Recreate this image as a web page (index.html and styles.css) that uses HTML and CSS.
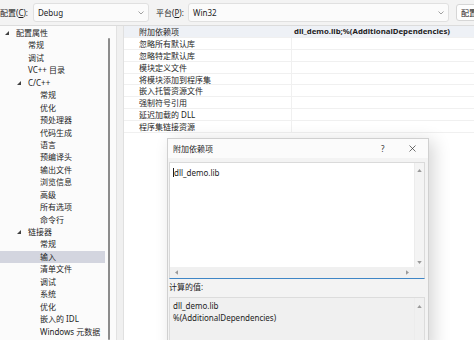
FILE: index.html
```html
<!DOCTYPE html>
<html lang="zh-CN">
<head>
<meta charset="utf-8">
<title>属性页</title>
<link rel="stylesheet" href="styles.css">
</head>
<body>
<div class="app">
  <div class="topbar">
    <span class="lbl lbl-cfg">配置(<u>C</u>):</span>
    <div class="combo combo-cfg"><span>Debug</span><svg class="chev" viewBox="0 0 6 4"><polyline points="0.5,0.5 3,3 5.5,0.5"/></svg></div>
    <span class="lbl lbl-plat">平台(<u>P</u>):</span>
    <div class="combo combo-plat"><span>Win32</span><svg class="chev" viewBox="0 0 6 4"><polyline points="0.5,0.5 3,3 5.5,0.5"/></svg></div>
    <div class="btn">配置管理器(<u>O</u>)...</div>
  </div>
  <div class="main">
    <div class="tree">
      <ul class="tree-list">
        <li class="node l0"><span class="twist"><svg class="tri" viewBox="0 0 4 4"><polygon points="4,0 4,4 0,4"/></svg></span>配置属性</li>
        <li class="node l1"><span class="twist"></span>常规</li>
        <li class="node l1"><span class="twist"></span>调试</li>
        <li class="node l1"><span class="twist"></span>VC++ 目录</li>
        <li class="node l1"><span class="twist"><svg class="tri" viewBox="0 0 4 4"><polygon points="4,0 4,4 0,4"/></svg></span>C/C++</li>
        <li class="node l2"><span class="twist"></span>常规</li>
        <li class="node l2"><span class="twist"></span>优化</li>
        <li class="node l2"><span class="twist"></span>预处理器</li>
        <li class="node l2"><span class="twist"></span>代码生成</li>
        <li class="node l2"><span class="twist"></span>语言</li>
        <li class="node l2"><span class="twist"></span>预编译头</li>
        <li class="node l2"><span class="twist"></span>输出文件</li>
        <li class="node l2"><span class="twist"></span>浏览信息</li>
        <li class="node l2"><span class="twist"></span>高级</li>
        <li class="node l2"><span class="twist"></span>所有选项</li>
        <li class="node l2"><span class="twist"></span>命令行</li>
        <li class="node l1"><span class="twist"><svg class="tri" viewBox="0 0 4 4"><polygon points="4,0 4,4 0,4"/></svg></span>链接器</li>
        <li class="node l2"><span class="twist"></span>常规</li>
        <li class="node l2 selected"><span class="twist"></span>输入</li>
        <li class="node l2"><span class="twist"></span>清单文件</li>
        <li class="node l2"><span class="twist"></span>调试</li>
        <li class="node l2"><span class="twist"></span>系统</li>
        <li class="node l2"><span class="twist"></span>优化</li>
        <li class="node l2"><span class="twist"></span>嵌入的 IDL</li>
        <li class="node l2"><span class="twist"></span>Windows 元数据</li>
      </ul>
      <div class="tree-scroll"><div class="thumb"></div></div>
    </div>
    <div class="grid">
      <div class="prow sel"><div class="pname">附加依赖项</div><div class="pval">dll_demo.lib;%(AdditionalDependencies)</div></div>
      <div class="prow"><div class="pname">忽略所有默认库</div><div class="pval"></div></div>
      <div class="prow"><div class="pname">忽略特定默认库</div><div class="pval"></div></div>
      <div class="prow"><div class="pname">模块定义文件</div><div class="pval"></div></div>
      <div class="prow"><div class="pname">将模块添加到程序集</div><div class="pval"></div></div>
      <div class="prow"><div class="pname">嵌入托管资源文件</div><div class="pval"></div></div>
      <div class="prow"><div class="pname">强制符号引用</div><div class="pval"></div></div>
      <div class="prow"><div class="pname">延迟加载的 DLL</div><div class="pval"></div></div>
      <div class="prow"><div class="pname">程序集链接资源</div><div class="pval"></div></div>
    </div>
  </div>

  <div class="dialog">
    <div class="dlg-title">
      <span class="dlg-caption">附加依赖项</span>
      <span class="dlg-help">?</span>
      <svg class="dlg-close" viewBox="0 0 7 7"><line x1="0.5" y1="0.5" x2="6.5" y2="6.5"/><line x1="6.5" y1="0.5" x2="0.5" y2="6.5"/></svg>
    </div>
    <div class="dlg-body">
      <div class="editbox">
        <div class="edit-main">
          <div class="edit-text"><span class="caret"></span>dll_demo.lib</div>
          <div class="vbar">
            <svg class="arr" viewBox="0 0 6 4"><polygon points="3,0 6,4 0,4"/></svg>
            <svg class="arr" viewBox="0 0 6 4"><polygon points="0,0 6,0 3,4"/></svg>
          </div>
        </div>
        <div class="hbar">
          <div class="htrack">
            <svg class="harr" viewBox="0 0 4 6"><polygon points="4,0 4,6 0,3"/></svg>
            <svg class="harr" viewBox="0 0 4 6"><polygon points="0,0 4,3 0,6"/></svg>
          </div>
          <div class="corner"></div>
        </div>
      </div>
      <div class="eval-label">计算的值:</div>
      <div class="evalbox">
        <div class="eval-text">
          <div>dll_demo.lib</div>
          <div>%(AdditionalDependencies)</div>
        </div>
        <div class="vbar vbar-eval">
          <svg class="arr" viewBox="0 0 6 4"><polygon points="3,0 6,4 0,4"/></svg>
        </div>
      </div>
    </div>
  </div>
</div>
</body>
</html>
```

FILE: styles.css
```css
* { box-sizing: border-box; }

html, body {
  margin: 0;
  padding: 0;
}

body {
  width: 474px;
  height: 340px;
  overflow: hidden;
  background: #f0f0f0;
  font-family: "Noto Sans", "Noto Sans CJK SC", sans-serif;
  font-size: 8px;
  color: #1e1e1e;
}

.app {
  position: relative;
  width: 474px;
  height: 340px;
}

/* ---------- top bar ---------- */
.topbar {
  height: 26px;
  display: flex;
  align-items: center;
  border-bottom: 1px solid #dcdcdc;
  background: #f3f3f3;
  white-space: nowrap;
  overflow: hidden;
}
.topbar > * { flex: none; }

.lbl { line-height: 12px; }
.lbl u { text-underline-offset: 1px; }
.lbl-cfg { margin-left: 0; width: 33px; }
.lbl-plat { margin-left: 7px; width: 32px; }

.combo {
  height: 19px;
  display: flex;
  align-items: center;
  justify-content: space-between;
  background: #fbfbfb;
  border: 1px solid #e0e0e0;
  border-radius: 3px;
  padding: 0 4px 0 4px;
}
.combo-cfg { width: 116px; }
.combo-plat { width: 261px; }

.chev {
  width: 6px;
  height: 4px;
  fill: none;
  stroke: #8a8a8a;
  stroke-width: 0.8;
}

.btn {
  margin-left: 7px;
  height: 17px;
  display: flex;
  align-items: center;
  padding: 0 4px;
  background: #fdfdfd;
  border: 1px solid #d6d6d6;
  border-radius: 3px;
}

/* ---------- main ---------- */
.main {
  display: flex;
  height: 314px;
}

.tree {
  width: 117px;
  flex: none;
  display: flex;
  background: #fbfbfb;
  border-right: 1px solid #e2e2e2;
}

.tree-list {
  list-style: none;
  margin: 0;
  padding: 1px 0 0 0;
  width: 105px;
}

.node {
  height: 12.45px;
  line-height: 12.45px;
  display: flex;
  align-items: center;
  white-space: nowrap;
}
.node.selected { background: #d3d5df; }

.twist {
  width: 12px;
  height: 12px;
  flex: none;
  display: flex;
  align-items: center;
  padding-left: 1px;
}
.l0 .twist { margin-left: 4px; }
.l1 .twist { margin-left: 16px; }
.l2 .twist { margin-left: 28px; }

.tri {
  width: 4px;
  height: 4px;
  fill: #404040;
}

.tree-scroll {
  width: 11px;
  padding-top: 12px;
  padding-left: 3px;
}
.thumb {
  width: 2px;
  height: 100%;
  background: #8c8c8c;
  border-radius: 1px;
}

.grid {
  margin-left: 6px;
  flex: 1;
  background: #ffffff;
  border-left: 1px solid #e0e0e0;
}

.prow {
  height: 11.9px;
  display: flex;
  border-bottom: 1px solid #f0f0f0;
}
.prow.sel { background: #eef1f6; }

.pname {
  width: 168px;
  padding-left: 15px;
  line-height: 11px;
  border-right: 1px solid #f0f0f0;
  white-space: nowrap;
}
.pval {
  flex: 1;
  padding-left: 2px;
  line-height: 11px;
  font-size: 7.8px;
  font-weight: bold;
  white-space: nowrap;
  overflow: hidden;
}

/* ---------- dialog (floats over the page) ---------- */
.dialog {
  position: absolute;
  left: 167px;
  top: 138px;
  width: 262px;
  height: 212px;
  background: #f3f3f3;
  border: 1px solid #d0d0d0;
  box-shadow: 5px 3px 16px rgba(0, 0, 0, 0.16);
}

.dlg-title {
  height: 19px;
  display: flex;
  align-items: center;
  background: #fbfbfb;
  padding-left: 5px;
}
.dlg-caption { flex: 1; }
.dlg-help {
  width: 10px;
  font-size: 8px;
  color: #333;
}
.dlg-close {
  width: 7px;
  height: 7px;
  margin-left: 18px;
  margin-right: 12px;
  stroke: #333;
  stroke-width: 0.7;
}

.dlg-body {
  padding: 4px 3px 0 1px;
}

.editbox {
  background: #ffffff;
  border: 1px solid #dadada;
  border-bottom: 1px solid #3f86c6;
  height: 117px;
  display: flex;
  flex-direction: column;
}

.edit-main {
  flex: 1;
  display: flex;
}
.edit-text {
  flex: 1;
  padding: 4px 0 0 3px;
  line-height: 12px;
}
.caret {
  display: inline-block;
  width: 1px;
  height: 9px;
  background: #222;
  vertical-align: -1px;
}

.vbar {
  width: 10px;
  background: #f4f4f4;
  border-left: 1px solid #ececec;
  display: flex;
  flex-direction: column;
  justify-content: space-between;
  align-items: center;
  padding: 6px 0 3px;
}
.arr {
  width: 5px;
  height: 3px;
  fill: #9a9a9a;
}

.hbar {
  height: 11px;
  display: flex;
  background: #f0f0f0;
}
.htrack {
  flex: 1;
  display: flex;
  justify-content: space-between;
  align-items: center;
  padding: 0 5px 0 5px;
}
.harr {
  width: 3px;
  height: 5px;
  fill: #9a9a9a;
}
.corner {
  width: 10px;
  background: #f0f0f0;
}

.eval-label {
  height: 18px;
  line-height: 16px;
  padding-left: 0;
}

.evalbox {
  height: 60px;
  display: flex;
  background: #f0f0f0;
  border: 1px solid #dcdcdc;
}
.eval-text {
  flex: 1;
  padding: 2px 0 0 3px;
  line-height: 12px;
}
.vbar-eval {
  justify-content: flex-start;
  padding-top: 7px;
  background: #f0f0f0;
}
```
